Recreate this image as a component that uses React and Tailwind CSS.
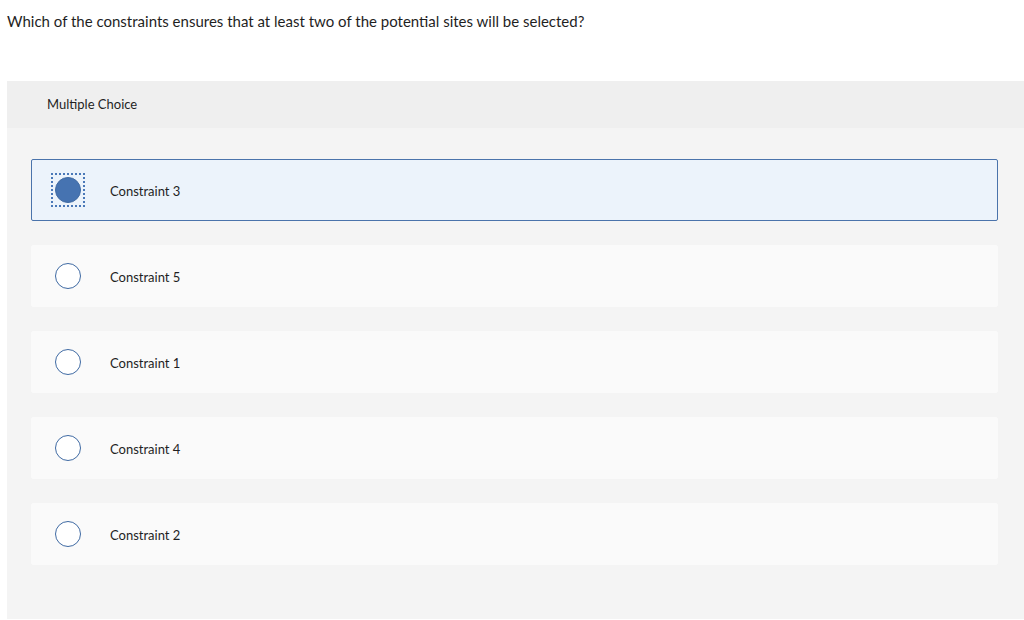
import React, { useState } from 'react';

const options = ['Constraint 3', 'Constraint 5', 'Constraint 1', 'Constraint 4', 'Constraint 2'];

function App() {
  const [selected, setSelected] = useState(0);

  return (
    <div className="w-[1024px] h-[620px] bg-white overflow-hidden font-['Lato',sans-serif] text-[#1f1f1f]">
      <p className="pl-[7px] pt-[12px] text-[15px] leading-[19px]">
        Which of the constraints ensures that at least two of the potential sites will be selected?
      </p>

      <div className="ml-[7px] mt-[50px] h-[538px] bg-[#f4f4f4]">
        <div className="h-[47px] bg-[#efefef] pl-[40px] pt-[1px] flex items-center text-[13px]">Multiple Choice</div>

        <div className="px-[24px] pt-[31px] pr-[26px] flex flex-col gap-[24px]">
          {options.map((opt, i) => {
            const on = selected === i;
            return (
              <div
                key={opt}
                onClick={() => setSelected(i)}
                className={`h-[62px] flex items-center rounded-[2px] cursor-pointer ${
                  on ? 'bg-[#ecf3fb] border border-[#4a73ab]' : 'bg-[#fafafa] border border-[#fafafa]'
                }`}
              >
                <div className="w-[72px] flex justify-center">
                  <div className={`p-[2px] ${on ? 'outline-2 outline-dotted outline-[#4a78b8]' : ''}`}>
                    <div
                      className={`w-[26px] h-[26px] rounded-full border-[1.5px] border-[#3f6aa3] ${
                        on ? 'bg-[#4673b1]' : 'bg-white'
                      }`}
                    />
                  </div>
                </div>
                <span className="pl-[6px] pt-[3px] text-[13px]">{opt}</span>
              </div>
            );
          })}
        </div>
      </div>
    </div>
  );
}

export default App;
